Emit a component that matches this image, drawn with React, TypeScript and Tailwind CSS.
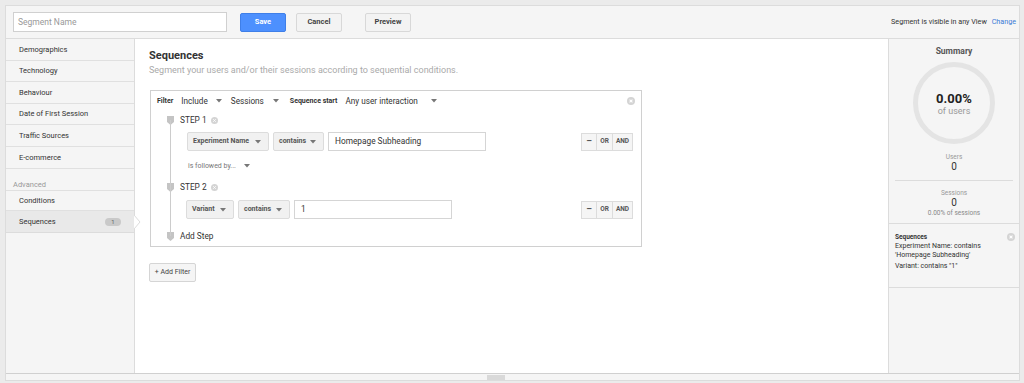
import React from "react";

const Caret = () => (
  <svg width="6" height="4" viewBox="0 0 6 4" className="inline-block shrink-0">
    <path d="M0 0 L6 0 L3 3.5 Z" fill="#777" />
  </svg>
);

const CloseCircle = ({ size = 9 }: { size?: number }) => (
  <svg width={size} height={size} viewBox="0 0 10 10" className="inline-block">
    <circle cx="5" cy="5" r="5" fill="#d4d4d4" />
    <path d="M3.2 3.2 L6.8 6.8 M6.8 3.2 L3.2 6.8" stroke="#fff" strokeWidth="1.3" />
  </svg>
);

const Marker = () => (
  <svg width="7" height="9" viewBox="0 0 7 9" className="block shrink-0">
    <path d="M0 0 H7 V6 L3.5 9 L0 6 Z" fill="#c4c4c4" />
  </svg>
);

const Drop = ({ label, w }: { label: string; w: string }) => (
  <div className={`${w} h-[19px] bg-[#f1f1f1] border border-[#dcdcdc] rounded-[2px] flex items-center justify-between pl-[5px] pr-[7px] text-[7px] font-bold text-[#555]`}>
    <span>{label}</span>
    <Caret />
  </div>
);

const OrAnd = () => (
  <div className="ml-auto mr-[8px] flex h-[18px] border border-[#dcdcdc] bg-[#f5f5f5] text-[6.5px] font-bold text-[#555]">
    <div className="w-[15px] flex items-center justify-center border-r border-[#dcdcdc] text-[9px]">–</div>
    <div className="w-[16px] flex items-center justify-center border-r border-[#dcdcdc]">OR</div>
    <div className="w-[19px] flex items-center justify-center">AND</div>
  </div>
);

const sideItems = ["Demographics", "Technology", "Behaviour", "Date of First Session", "Traffic Sources", "E-commerce"];

export default function App() {
  return (
    <div
      className="w-[1024px] h-[383px] bg-[#ebebeb] pt-[5px] pl-[5px] pr-[4px] overflow-hidden"
      style={{ fontFamily: "Roboto, 'Liberation Sans', sans-serif" }}
    >
      <div className="h-[376px] border border-[#dcdcdc] bg-white flex flex-col">
        {/* Top bar */}
        <div className="h-[33px] bg-[#f5f5f5] border-b border-[#dcdcdc] flex items-center pl-[7px] pr-[3px]">
          <div className="w-[214px] h-[20px] bg-white border border-[#d0d0d0] flex items-center px-[4px] text-[8.5px] text-[#999]">
            Segment Name
          </div>
          <div className="ml-[13px] w-[46px] h-[19px] bg-[#4d90fe] border border-[#3f7fe8] rounded-[2px] flex items-center justify-center text-[7.5px] font-bold text-white">
            Save
          </div>
          <div className="ml-[10px] w-[46px] h-[19px] bg-[#f3f3f3] border border-[#d8d8d8] rounded-[2px] flex items-center justify-center text-[7.5px] font-bold text-[#444]">
            Cancel
          </div>
          <div className="ml-[23px] w-[46px] h-[19px] bg-[#f3f3f3] border border-[#d8d8d8] rounded-[2px] flex items-center justify-center text-[7.5px] font-bold text-[#444]">
            Preview
          </div>
          <div className="ml-auto text-[7.2px] text-[#333]">
            Segment is visible in any View <span className="ml-[3px] text-[#3a7bd5]">Change</span>
          </div>
        </div>

        {/* Body */}
        <div className="flex flex-1 min-h-0">
          {/* Sidebar */}
          <div className="w-[129px] bg-[#f5f5f5] border-r border-[#dcdcdc] flex flex-col">
            {sideItems.map((s) => (
              <div key={s} className="h-[21.6px] border-b border-[#e0e0e0] flex items-center pl-[13px] text-[7.5px] text-[#333]">
                {s}
              </div>
            ))}
            <div className="h-[21px] flex items-end pl-[7px] pb-[1px] text-[7.5px] text-[#999] leading-[9px]">Advanced</div>
            <div className="h-[21.5px] border-t border-b border-[#e0e0e0] flex items-center pl-[13px] text-[7.5px] text-[#333]">
              Conditions
            </div>
            <div className="relative h-[22px] bg-[#e9e9e9] border-b border-[#dcdcdc] flex items-center pl-[13px] pr-[13px] text-[7.5px] text-[#333]">
              <span>Sequences</span>
              <span className="ml-auto w-[16px] h-[8px] rounded-full bg-[#c9c9c9] text-[6px] text-[#666] flex items-center justify-center">1</span>
              <svg width="7" height="14" viewBox="0 0 7 14" className="absolute -right-[7px] top-[4px]">
                <path d="M0 0 L6 7 L0 14" fill="#ffffff" stroke="#dcdcdc" strokeWidth="1" />
              </svg>
            </div>
          </div>

          {/* Main */}
          <div className="flex-1 bg-white pl-[14px] pt-[10px]">
            <div className="text-[11px] font-bold text-[#333] leading-[14px]">Sequences</div>
            <div className="text-[9px] text-[#aaa] leading-[12px] mt-[1px]">
              Segment your users and/or their sessions according to sequential conditions.
            </div>

            <div className="mt-[14px] ml-[1px] w-[492px] h-[157px] border border-[#d0d0d0] relative pl-[6px] pt-[4px]">
              {/* filter row */}
              <div className="flex items-center h-[12px] text-[8.2px] text-[#333]">
                <span className="text-[7px] font-bold">Filter</span>
                <span className="ml-[8px]">Include</span>
                <span className="ml-[8px] flex"><Caret /></span>
                <span className="ml-[9px]">Sessions</span>
                <span className="ml-[9px] flex"><Caret /></span>
                <span className="ml-[11px] text-[7px] font-bold">Sequence start</span>
                <span className="ml-[8px]">Any user interaction</span>
                <span className="ml-[13px] flex"><Caret /></span>
                <span className="absolute right-[6px] top-[6px] flex">
                  <CloseCircle size={8} />
                </span>
              </div>

              {/* steps */}
              <div className="relative ml-[10px] mt-[6px]">
                <div className="absolute left-[3px] top-[7px] w-[1px] h-[116px] bg-[#cccccc]" />
                {/* Step 1 */}
                <div className="flex items-center h-[14px]">
                  <Marker />
                  <span className="ml-[6px] text-[8.3px] text-[#333]">STEP 1</span>
                  <span className="ml-[4px] flex"><CloseCircle size={7} /></span>
                </div>
                <div className="flex items-center mt-[5px] pl-[20px]">
                  <Drop label="Experiment Name" w="w-[82px]" />
                  <div className="ml-[4px]"><Drop label="contains" w="w-[51px]" /></div>
                  <div className="ml-[4px] w-[158px] h-[19px] bg-white border border-[#d5d5d5] flex items-center px-[6px] text-[8.3px] text-[#333]">
                    Homepage Subheading
                  </div>
                  <OrAnd />
                </div>
                <div className="flex items-center mt-[10px] pl-[21px] text-[7px] text-[#777] h-[10px]">
                  <span className="mr-[8px]">is followed by...</span>
                  <Caret />
                </div>
                {/* Step 2 */}
                <div className="flex items-center h-[14px] mt-[9px]">
                  <Marker />
                  <span className="ml-[6px] text-[8.3px] text-[#333]">STEP 2</span>
                  <span className="ml-[4px] flex"><CloseCircle size={7} /></span>
                </div>
                <div className="flex items-center mt-[6px] pl-[19px]">
                  <Drop label="Variant" w="w-[48px]" />
                  <div className="ml-[4px]"><Drop label="contains" w="w-[52px]" /></div>
                  <div className="ml-[4px] w-[158px] h-[19px] bg-white border border-[#d5d5d5] flex items-center px-[6px] text-[8.3px] text-[#333]">
                    1
                  </div>
                  <OrAnd />
                </div>
                <div className="flex items-center h-[14px] mt-[10px]">
                  <Marker />
                  <span className="ml-[6px] text-[8.3px] text-[#333]">Add Step</span>
                </div>
              </div>
            </div>

            <div className="mt-[16px] w-[47px] h-[19px] bg-[#f5f5f5] border border-[#d5d5d5] rounded-[2px] flex items-center justify-center text-[7px] text-[#444]">
              + Add Filter
            </div>
          </div>

          {/* Summary */}
          <div className="w-[131px] bg-[#f5f5f5] border-l border-[#dcdcdc] flex flex-col items-stretch">
            <div className="text-center text-[8.5px] font-bold text-[#555] mt-[6px]">Summary</div>
            <div className="mx-auto mt-[4px] w-[82px] h-[82px] rounded-full border-[5px] border-[#e4e4e4] flex flex-col items-center justify-center">
              <div className="text-[13px] font-bold text-[#222] leading-[15px] mt-[2px]">0.00%</div>
              <div className="text-[9px] text-[#999] leading-[11px]">of users</div>
            </div>
            <div className="text-center mt-[9px] text-[6.5px] text-[#999] leading-[8px]">Users</div>
            <div className="text-center text-[10px] text-[#333] leading-[12px]">0</div>
            <div className="mx-[6px] mt-[7px] border-t border-[#dcdcdc]" />
            <div className="text-center mt-[8px] text-[6.5px] text-[#999] leading-[8px]">Sessions</div>
            <div className="text-center text-[10px] text-[#333] leading-[12px]">0</div>
            <div className="text-center text-[6.5px] text-[#888] leading-[8px]">0.00% of sessions</div>
            <div className="mt-[6px] border-t border-[#dcdcdc]" />
            <div className="relative px-[6px] pt-[9px] pb-[16px] text-[7px] text-[#333] leading-[9px] border-b border-[#dcdcdc]">
              <div className="font-bold text-[6.5px]">Sequences</div>
              <div>Experiment Name: contains</div>
              <div>'Homepage Subheading'</div>
              <div className="mt-[2px]">Variant: contains "1"</div>
              <span className="absolute right-[4px] top-[9px] flex"><CloseCircle size={8} /></span>
            </div>
          </div>
        </div>

        {/* bottom strip */}
        <div className="h-[7px] bg-[#f5f5f5] border-t border-[#d0d0d0] relative">
          <div className="absolute left-[481px] top-[1px] w-[18px] h-[5px] bg-[#d9d9d9]" />
        </div>
      </div>
    </div>
  );
}
